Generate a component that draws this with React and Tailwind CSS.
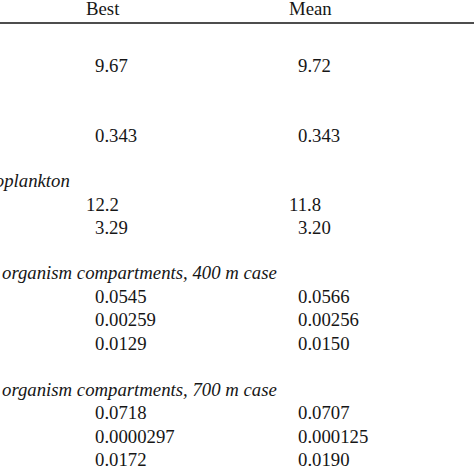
import React from 'react';

// Rows of the cropped results table. `wide` marks values with two integer digits,
// which sit half an em further left so the decimal points line up.
const sections = [
    { gap: 'mt-[30px]', rows: [{ best: '9.67', mean: '9.72' }] },
    { gap: 'mt-[46.5px]', rows: [{ best: '0.343', mean: '0.343' }] },
    {
        gap: 'mt-[21.5px]',
        label: 'Zooplankton',
        labelClass: '-ml-[25px]',
        rows: [
            { best: '12.2', mean: '11.8', wide: true },
            { best: '3.29', mean: '3.20' },
        ],
    },
    {
        gap: 'mt-[21.5px]',
        label: 'organism compartments, 400 m case',
        labelClass: 'ml-[2px]',
        rows: [
            { best: '0.0545', mean: '0.0566' },
            { best: '0.00259', mean: '0.00256' },
            { best: '0.0129', mean: '0.0150' },
        ],
    },
    {
        gap: 'mt-[22.5px]',
        label: 'organism compartments, 700 m case',
        labelClass: 'ml-[2px]',
        rows: [
            { best: '0.0718', mean: '0.0707' },
            { best: '0.0000297', mean: '0.000125' },
            { best: '0.0172', mean: '0.0190' },
        ],
    },
];

const Row = ({ best, mean, wide }) => (
    <div className="flex h-[23.5px] leading-[23.5px]">
        <div className={wide ? 'w-[298px] pl-[86px]' : 'w-[298px] pl-[95px]'}>{best}</div>
        <div className={wide ? '-ml-[9px]' : ''}>{mean}</div>
    </div>
);

const App = () => {
    return (
        <div className="w-[474px] h-[474px] overflow-hidden bg-white text-[#161616] text-[18.75px] font-['Liberation_Serif',serif]">
            {/* Column headers */}
            <div className="flex h-[24px] leading-[15px] pt-[1px] pb-[6px] border-b-2 border-[#4d4d4d]">
                <div className="w-[289px] pl-[86px]">Best</div>
                <div>Mean</div>
            </div>

            {sections.map((section, i) => (
                <div key={i} className={section.gap}>
                    {section.label && (
                        <div className="h-[23.5px] leading-[23.5px] italic whitespace-nowrap">
                            <span className={`inline-block ${section.labelClass}`}>{section.label}</span>
                        </div>
                    )}
                    {section.rows.map((row, j) => (
                        <Row key={j} {...row} />
                    ))}
                </div>
            ))}
        </div>
    );
};

export default App;
